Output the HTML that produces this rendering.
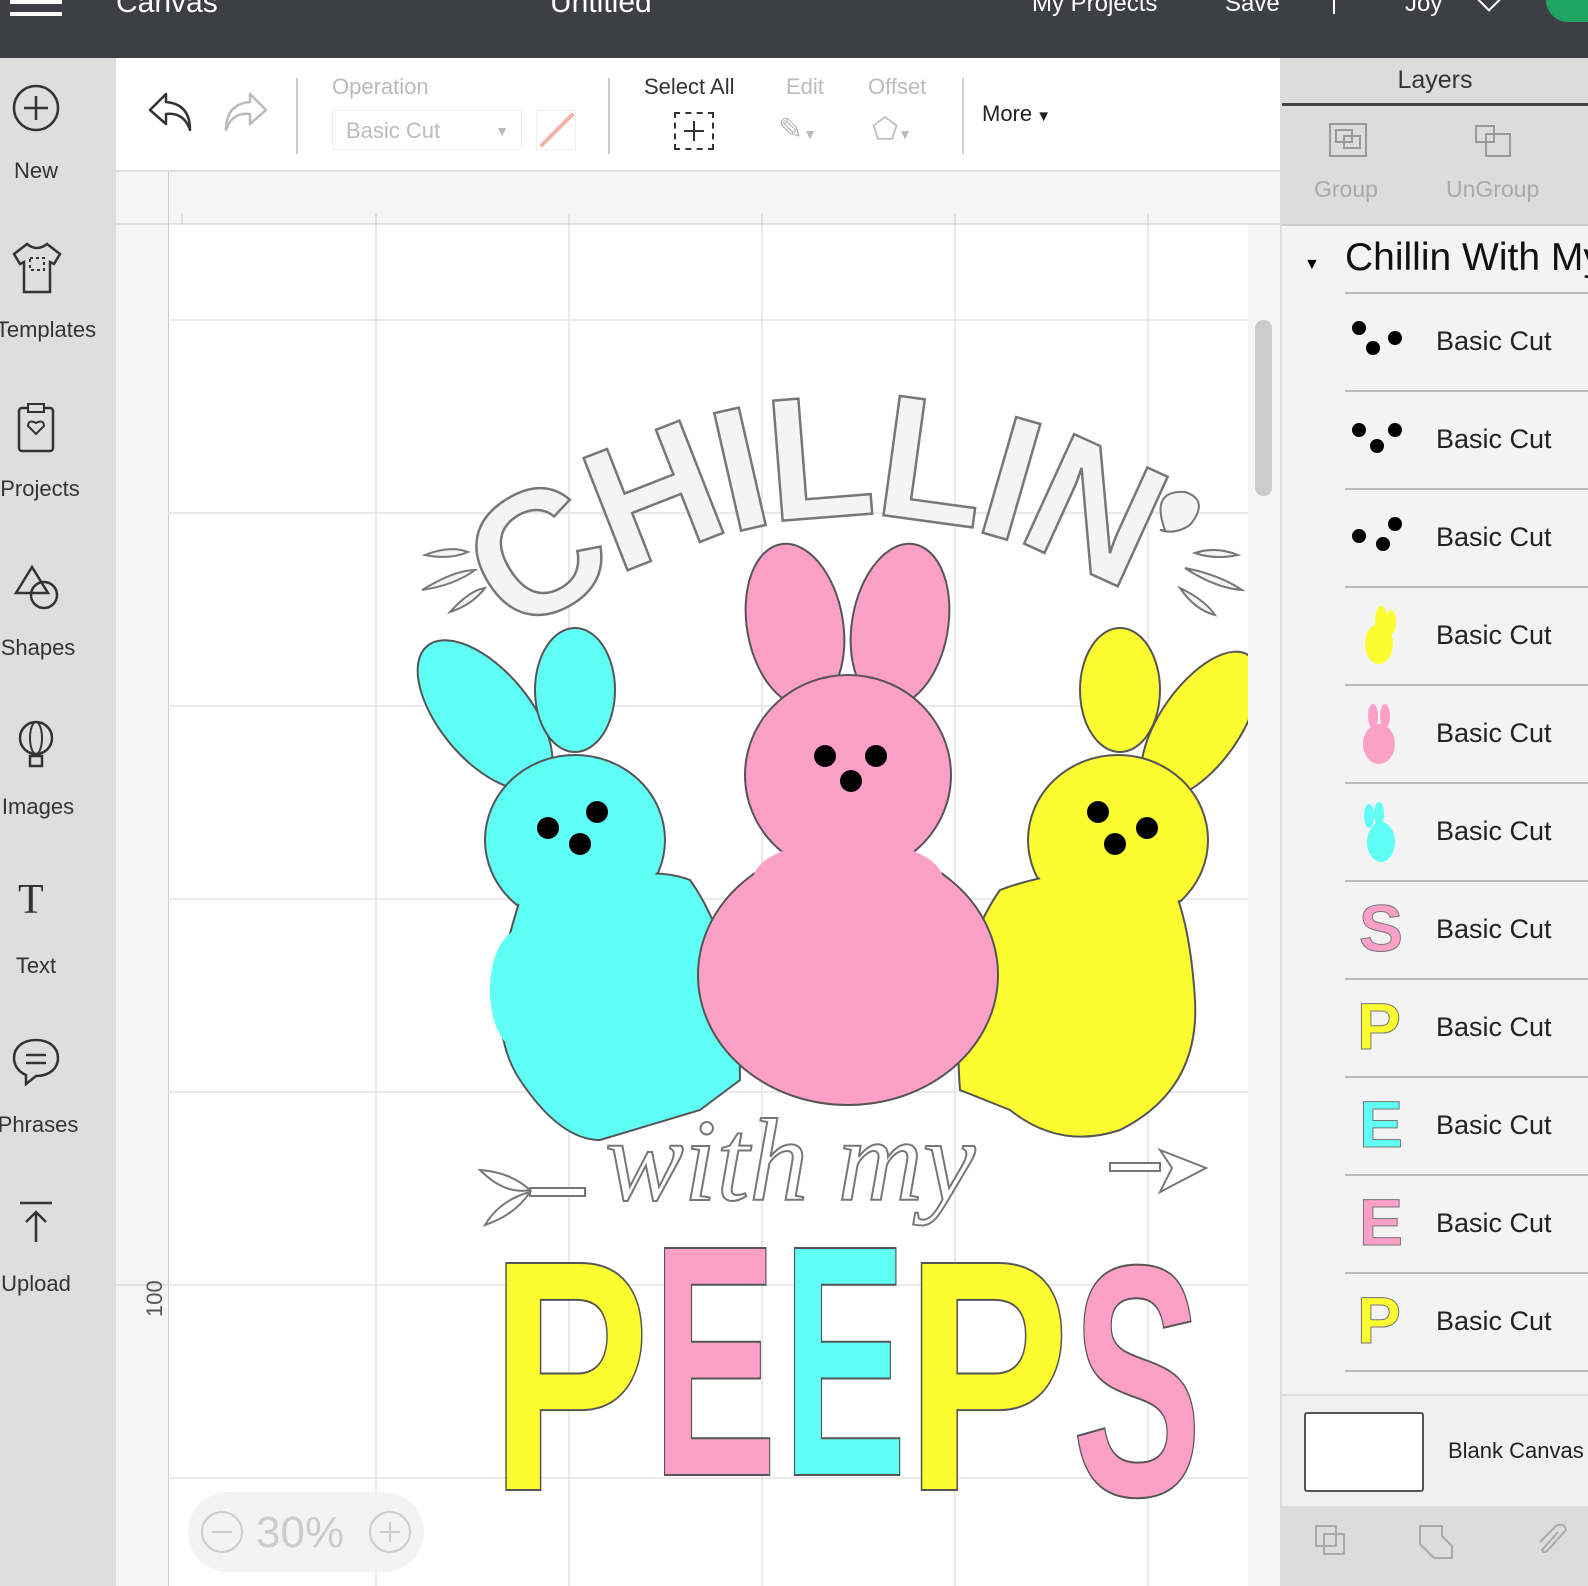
<!DOCTYPE html>
<html><head><meta charset="utf-8"><style>
*{margin:0;padding:0;box-sizing:border-box}
html,body{width:1588px;height:1586px;overflow:hidden;margin:0}
body{font-family:"Liberation Sans",sans-serif;background:#fff}
#root{position:relative;width:1588px;height:1586px;overflow:hidden;contain:paint}
.a{position:absolute}
.top{left:0;top:0;width:1588px;height:58px;background:#3d3f45;color:#fff;font-size:26px;overflow:hidden}
.side{left:0;top:58px;width:116px;height:1528px;background:#dedede;overflow:hidden}
.si{position:absolute;left:0;width:116px;text-align:center;font-size:22px;color:#333}
.tb{left:116px;top:58px;width:1164px;height:114px;background:#fff;border-bottom:2px solid #ddd}
.lay{left:1280px;top:58px;width:308px;height:1528px;background:#f3f3f3;border-left:2px solid #ddd;overflow:hidden}
.row{position:absolute;left:63px;width:245px;height:98px;border-bottom:2px solid #bbb}
.row span{position:absolute;left:91px;top:32px;font-size:27px;color:#222}
</style></head><body><div id="root">
<div class="a top">
 <div class="a" style="left:10px;top:0;width:52px;height:4px;background:#fff"></div>
 <div class="a" style="left:10px;top:12px;width:52px;height:4px;background:#fff"></div>
 <div class="a" style="left:116px;top:-14px;font-size:30px">Canvas</div>
 <div class="a" style="left:550px;top:-14px;font-size:30px">Untitled</div>
 <div class="a" style="left:1032px;top:-10px;font-size:24px">My Projects</div>
 <div class="a" style="left:1225px;top:-10px;font-size:24px">Save</div>
 <div class="a" style="left:1333px;top:-2px;width:2px;height:16px;background:#fff"></div>
 <div class="a" style="left:1405px;top:-10px;font-size:24px">Joy</div>
 <div class="a" style="left:1480px;top:-10px;width:18px;height:18px;border:2px solid #fff;transform:rotate(45deg)"></div>
 <div class="a" style="left:1546px;top:-22px;width:42px;height:44px;border-radius:22px 0 0 22px;background:#1fa463"></div>
</div>
<div class="a side">
 <svg class="a" style="left:12px;top:26px" width="48" height="48"><circle cx="24" cy="24" r="22" fill="none" stroke="#333" stroke-width="2.5"/><path d="M24 12v24M12 24h24" stroke="#333" stroke-width="2.5"/></svg>
 <div class="si" style="top:100px;left:-22px">New</div>
 <svg class="a" style="left:10px;top:182px" width="54" height="56"><path d="M17 4 L4 14 L10 24 L14 22 L14 52 L40 52 L40 22 L44 24 L50 14 L37 4 Q27 12 17 4Z" fill="none" stroke="#333" stroke-width="2.5"/><rect x="20" y="18" width="14" height="12" fill="none" stroke="#333" stroke-dasharray="3 3" stroke-width="2"/></svg>
 <div class="si" style="top:259px;left:-12px">Templates</div>
 <svg class="a" style="left:16px;top:344px" width="40" height="52"><rect x="3" y="6" width="34" height="43" rx="3" fill="none" stroke="#333" stroke-width="2.5"/><rect x="12" y="2" width="16" height="8" fill="#dedede" stroke="#333" stroke-width="2"/><path d="M20 32 L12 24 Q12 17 20 21 Q28 17 28 24Z" fill="none" stroke="#333" stroke-width="2"/></svg>
 <div class="si" style="top:418px;left:-18px">Projects</div>
 <svg class="a" style="left:12px;top:505px" width="48" height="48"><path d="M20 4 L4 30 L36 30Z" fill="none" stroke="#333" stroke-width="2.5"/><circle cx="32" cy="32" r="13" fill="none" stroke="#333" stroke-width="2.5"/></svg>
 <div class="si" style="top:577px;left:-20px">Shapes</div>
 <svg class="a" style="left:16px;top:662px" width="40" height="50"><ellipse cx="20" cy="18" rx="16" ry="16" fill="none" stroke="#333" stroke-width="2.5"/><ellipse cx="20" cy="18" rx="6" ry="16" fill="none" stroke="#333" stroke-width="2"/><rect x="14" y="36" width="12" height="10" fill="none" stroke="#333" stroke-width="2.5"/></svg>
 <div class="si" style="top:736px;left:-20px">Images</div>
 <div class="a" style="left:18px;top:818px;font-size:42px;color:#333;font-family:'Liberation Serif',serif">T</div>
 <div class="si" style="top:895px;left:-22px">Text</div>
 <svg class="a" style="left:10px;top:978px" width="52" height="52"><path d="M26 4 C12 4 4 12 4 22 C4 30 9 36 16 39 L16 48 L26 40 C40 40 48 32 48 22 C48 12 40 4 26 4Z" fill="none" stroke="#333" stroke-width="2.5"/><path d="M16 19h20M16 27h20" stroke="#333" stroke-width="2.5"/></svg>
 <div class="si" style="top:1054px;left:-20px">Phrases</div>
 <svg class="a" style="left:16px;top:1142px" width="40" height="44"><path d="M4 3h32M20 42V12M10 22l10-10 10 10" fill="none" stroke="#333" stroke-width="2.5"/></svg>
 <div class="si" style="top:1213px;left:-22px">Upload</div>
</div>
<div class="a tb">
 <svg class="a" style="left:30px;top:32px" width="50" height="44"><path d="M20 4 L4 20 L20 34 L20 24 Q38 22 44 40 Q44 14 20 12Z" fill="none" stroke="#333" stroke-width="2.5" stroke-linejoin="round"/></svg>
 <svg class="a" style="left:104px;top:32px" width="50" height="44"><path d="M30 4 L46 20 L30 34 L30 24 Q12 22 6 40 Q6 14 30 12Z" fill="none" stroke="#bbb" stroke-width="2.5" stroke-linejoin="round"/></svg>
 <div class="a" style="left:180px;top:20px;width:2px;height:76px;background:#ccc"></div>
 <div class="a" style="left:216px;top:16px;font-size:22px;color:#bbb">Operation</div>
 <div class="a" style="left:216px;top:52px;width:190px;height:40px;border:1px solid #eee;border-radius:3px;font-size:22px;color:#bbb;padding:7px 13px">Basic Cut<span style="position:absolute;right:12px;font-size:14px;top:12px">▼</span></div>
 <div class="a" style="left:420px;top:52px;width:40px;height:40px;border:1px solid #eee"><div class="a" style="left:18px;top:-4px;width:4px;height:46px;background:#f2b3a8;transform:rotate(45deg)"></div></div>
 <div class="a" style="left:492px;top:20px;width:2px;height:76px;background:#ccc"></div>
 <div class="a" style="left:528px;top:16px;font-size:22px;color:#333">Select All</div>
 <div class="a" style="left:558px;top:54px;width:40px;height:38px;border:2px dashed #333"><div class="a" style="left:8px;top:16px;width:20px;height:2px;background:#333"></div><div class="a" style="left:17px;top:7px;width:2px;height:20px;background:#333"></div></div>
 <div class="a" style="left:670px;top:16px;font-size:22px;color:#bbb">Edit</div>
 <div class="a" style="left:662px;top:54px;font-size:30px;color:#bbb">✎<span style="font-size:14px">▼</span></div>
 <div class="a" style="left:752px;top:16px;font-size:22px;color:#bbb">Offset</div>
 <div class="a" style="left:756px;top:54px;font-size:30px;color:#bbb">⬠<span style="font-size:14px">▼</span></div>
 <div class="a" style="left:846px;top:20px;width:2px;height:76px;background:#ccc"></div>
 <div class="a" style="left:866px;top:43px;font-size:22px;color:#222">More<span style="font-size:15px"> ▼</span></div>
</div>
<div class="a" style="left:116px;top:172px;width:1164px;height:1414px;background:#f5f5f5"></div>
<div class="a" style="left:168px;top:224px;width:1080px;height:1362px;background:#fff"></div>
<div class="a" style="left:168px;top:172px;width:1px;height:1414px;background:#ccc"></div>
<svg class="a" style="left:116px;top:172px" width="1164" height="1414">
 <g stroke="#e4e4e4" stroke-width="1.5">
  <line x1="260" y1="52" x2="260" y2="1414"/><line x1="453" y1="52" x2="453" y2="1414"/><line x1="646" y1="52" x2="646" y2="1414"/><line x1="839" y1="52" x2="839" y2="1414"/><line x1="1032" y1="52" x2="1032" y2="1414"/>
  <line x1="52" y1="148" x2="1132" y2="148"/><line x1="52" y1="341" x2="1132" y2="341"/><line x1="52" y1="534" x2="1132" y2="534"/><line x1="52" y1="727" x2="1132" y2="727"/><line x1="52" y1="920" x2="1132" y2="920"/><line x1="52" y1="1113" x2="1132" y2="1113"/><line x1="52" y1="1306" x2="1132" y2="1306"/>
 </g>
 <g stroke="#ccc"><line x1="66" y1="42" x2="66" y2="52"/><line x1="260" y1="42" x2="260" y2="52"/><line x1="453" y1="42" x2="453" y2="52"/><line x1="646" y1="42" x2="646" y2="52"/><line x1="839" y1="42" x2="839" y2="52"/><line x1="1032" y1="42" x2="1032" y2="52"/><line x1="0" y1="52" x2="1164" y2="52"/></g>
 <line x1="0" y1="1113" x2="52" y2="1113" stroke="#ccc"/>
 <text x="26" y="1165" transform="rotate(-90 26 1145)" font-size="22" fill="#555" font-family="Liberation Sans">100</text>
 <rect x="1139" y="148" width="17" height="176" rx="8" fill="#ccc"/>
</svg>
<svg class="a" style="left:0;top:0" width="1248" height="1586">
 <defs><path id="arc" d="M515 640 Q850 400 1175 625"/></defs>
 <text font-family="Liberation Sans" font-weight="bold" font-size="175" fill="#f4f4f4" stroke="#777" stroke-width="2.5" letter-spacing="-6"><textPath href="#arc" startOffset="0%">CHILLIN</textPath></text>
 <path d="M1165 530 Q1150 490 1185 492 Q1210 500 1190 525 Q1175 535 1160 530Z" fill="#f4f4f4" stroke="#777" stroke-width="2"/>
 <g fill="#f4f4f4" stroke="#777" stroke-width="2">
  <path d="M425 555 Q450 545 468 552 Q450 560 425 555Z"/><path d="M422 590 Q455 570 475 570 Q455 585 422 590Z"/><path d="M450 612 Q470 590 485 588 Q472 605 450 612Z"/>
  <path d="M1195 553 Q1215 546 1238 555 Q1215 560 1195 553Z"/><path d="M1185 568 Q1220 575 1242 590 Q1215 588 1185 568Z"/><path d="M1180 588 Q1205 600 1215 615 Q1195 610 1180 588Z"/>
 </g>
 <g fill="#5ffff6" stroke="#555" stroke-width="2">
  <ellipse cx="485" cy="715" rx="45" ry="90" transform="rotate(-40 485 715)"/>
  <ellipse cx="575" cy="690" rx="40" ry="62"/>
  <ellipse cx="575" cy="840" rx="90" ry="85"/>
  <path d="M520 900 Q480 1020 520 1080 Q560 1140 600 1140 L700 1110 L740 1080 Q740 950 690 880 Q640 860 520 900Z"/>
 </g>
 <ellipse cx="575" cy="840" rx="88" ry="83" fill="#5ffff6"/>
 <ellipse cx="520" cy="990" rx="30" ry="60" fill="#5ffff6"/>
 <g fill="#fcfc30" stroke="#555" stroke-width="2">
  <ellipse cx="1120" cy="690" rx="40" ry="62"/>
  <ellipse cx="1200" cy="725" rx="40" ry="85" transform="rotate(35 1200 725)"/>
  <ellipse cx="1118" cy="840" rx="90" ry="85"/>
  <path d="M1000 890 Q950 960 960 1090 L1010 1110 Q1060 1150 1120 1130 Q1200 1090 1195 1000 Q1190 920 1170 880 Q1080 860 1000 890Z"/>
 </g>
 <ellipse cx="1118" cy="840" rx="88" ry="83" fill="#fcfc30"/>
 <g fill="#fda0c8" stroke="#555" stroke-width="2">
  <ellipse cx="795" cy="625" rx="48" ry="82" transform="rotate(-10 795 625)"/>
  <ellipse cx="900" cy="625" rx="48" ry="82" transform="rotate(10 900 625)"/>
  <ellipse cx="848" cy="775" rx="103" ry="100"/>
  <ellipse cx="848" cy="975" rx="150" ry="130"/>
 </g>
 <ellipse cx="848" cy="775" rx="101" ry="98" fill="#fda0c8"/>
 <ellipse cx="848" cy="880" rx="95" ry="40" fill="#fda0c8"/>
 <g fill="#000">
  <circle cx="548" cy="828" r="11"/><circle cx="597" cy="812" r="11"/><circle cx="580" cy="844" r="11"/>
  <circle cx="825" cy="756" r="11"/><circle cx="876" cy="756" r="11"/><circle cx="851" cy="781" r="11"/>
  <circle cx="1098" cy="812" r="11"/><circle cx="1147" cy="828" r="11"/><circle cx="1115" cy="844" r="11"/>
 </g>
 <text x="605" y="1200" font-family="Liberation Serif" font-style="italic" font-size="118" fill="#fff" stroke="#777" stroke-width="2">with my</text>
 <g fill="#fff" stroke="#777" stroke-width="2">
  <path d="M530 1188 h55 v8 h-55z"/><path d="M1110 1163 h50 v8 h-50z"/>
  <path d="M1160 1150 L1206 1168 L1160 1192 L1172 1168Z"/>
  <path d="M480 1170 Q510 1172 530 1190 Q505 1195 480 1170Z"/><path d="M485 1225 Q500 1200 530 1192 Q515 1215 485 1225Z"/>
 </g>
 <g font-family="Liberation Sans" font-weight="bold" font-size="330" stroke="#555" stroke-width="2">
  <text x="490" y="1490" fill="#fcfc30" textLength="160" lengthAdjust="spacingAndGlyphs">P</text>
  <text x="652" y="1475" fill="#fda0c8" textLength="125" lengthAdjust="spacingAndGlyphs">E</text>
  <text x="782" y="1475" fill="#5ffff6" textLength="125" lengthAdjust="spacingAndGlyphs">E</text>
  <text x="905" y="1490" fill="#fcfc30" textLength="165" lengthAdjust="spacingAndGlyphs">P</text>
  <text x="1072" y="1495" fill="#fda0c8" textLength="130" lengthAdjust="spacingAndGlyphs">S</text>
 </g>
 <rect x="188" y="1492" width="236" height="80" rx="40" fill="#f2f2f2" opacity=".9"/>
 <circle cx="222" cy="1532" r="20" fill="none" stroke="#ccc" stroke-width="2"/><line x1="212" y1="1532" x2="232" y2="1532" stroke="#ccc" stroke-width="2"/>
 <text x="256" y="1547" font-family="Liberation Sans" font-size="44" fill="#ccc">30%</text>
 <circle cx="390" cy="1532" r="20" fill="none" stroke="#ccc" stroke-width="2"/><path d="M380 1532h20M390 1522v20" stroke="#ccc" stroke-width="2"/>
</svg>
<div class="a lay">
 <div class="a" style="left:0;top:0;width:306px;height:48px;background:#dcdcdc;border-bottom:3px solid #444;text-align:center;font-size:25px;color:#333;padding-top:8px">Layers</div>
 <div class="a" style="left:0;top:48px;width:306px;height:120px;background:#dcdcdc;border-bottom:2px solid #ccc">
  <svg class="a" style="left:44px;top:14px" width="46" height="42"><rect x="4" y="4" width="36" height="32" fill="none" stroke="#999" stroke-width="2"/><rect x="10" y="10" width="16" height="12" fill="none" stroke="#999" stroke-width="2"/><rect x="18" y="16" width="16" height="12" fill="none" stroke="#999" stroke-width="2"/></svg>
  <div class="a" style="left:32px;top:70px;font-size:23px;color:#aaa">Group</div>
  <svg class="a" style="left:190px;top:14px" width="46" height="42"><rect x="4" y="6" width="18" height="16" fill="none" stroke="#999" stroke-width="2"/><rect x="14" y="14" width="24" height="22" fill="none" stroke="#999" stroke-width="2"/></svg>
  <div class="a" style="left:164px;top:70px;font-size:23px;color:#aaa">UnGroup</div>
 </div>
 <div class="a" style="left:22px;top:198px;font-size:16px">▼</div>
 <div class="a" style="left:63px;top:178px;width:243px;overflow:hidden;font-size:39px;color:#111;white-space:nowrap">Chillin With My</div>
 <div class="a" style="left:63px;top:234px;width:243px;height:2px;background:#bbb"></div>
 <div class="row" style="top:236px"><svg class="a" style="left:4px;top:24px" width="60" height="50"><circle cx="10" cy="10" r="7"/><circle cx="46" cy="20" r="7"/><circle cx="24" cy="30" r="7"/></svg><span>Basic Cut</span></div>
 <div class="row" style="top:334px"><svg class="a" style="left:4px;top:24px" width="60" height="50"><circle cx="10" cy="14" r="7"/><circle cx="46" cy="14" r="7"/><circle cx="28" cy="30" r="7"/></svg><span>Basic Cut</span></div>
 <div class="row" style="top:432px"><svg class="a" style="left:4px;top:24px" width="60" height="50"><circle cx="10" cy="22" r="7"/><circle cx="46" cy="10" r="7"/><circle cx="34" cy="30" r="7"/></svg><span>Basic Cut</span></div>
 <div class="row" style="top:530px"><svg class="a" style="left:10px;top:16px" width="50" height="66"><ellipse cx="24" cy="40" rx="14" ry="20" fill="#fcfc30"/><ellipse cx="26" cy="16" rx="6" ry="14" fill="#fcfc30"/><ellipse cx="36" cy="18" rx="5" ry="12" fill="#fcfc30"/></svg><span>Basic Cut</span></div>
 <div class="row" style="top:628px"><svg class="a" style="left:10px;top:16px" width="50" height="66"><ellipse cx="24" cy="42" rx="16" ry="20" fill="#fda0c8"/><ellipse cx="18" cy="14" rx="5" ry="12" fill="#fda0c8"/><ellipse cx="30" cy="14" rx="5" ry="12" fill="#fda0c8"/></svg><span>Basic Cut</span></div>
 <div class="row" style="top:726px"><svg class="a" style="left:10px;top:16px" width="50" height="66"><ellipse cx="26" cy="42" rx="14" ry="20" fill="#5ffff6"/><ellipse cx="14" cy="16" rx="5" ry="12" fill="#5ffff6"/><ellipse cx="24" cy="14" rx="5" ry="12" fill="#5ffff6"/></svg><span>Basic Cut</span></div>
 <div class="row" style="top:824px"><b class="a" style="left:14px;top:8px;font-size:66px;color:#fda0c8;-webkit-text-stroke:1px #777">S</b><span>Basic Cut</span></div>
 <div class="row" style="top:922px"><b class="a" style="left:12px;top:8px;font-size:66px;color:#fcfc30;-webkit-text-stroke:1px #777">P</b><span>Basic Cut</span></div>
 <div class="row" style="top:1020px"><b class="a" style="left:14px;top:8px;font-size:66px;color:#5ffff6;-webkit-text-stroke:1px #777">E</b><span>Basic Cut</span></div>
 <div class="row" style="top:1118px"><b class="a" style="left:14px;top:8px;font-size:66px;color:#fda0c8;-webkit-text-stroke:1px #777">E</b><span>Basic Cut</span></div>
 <div class="row" style="top:1216px"><b class="a" style="left:12px;top:8px;font-size:66px;color:#fcfc30;-webkit-text-stroke:1px #777">P</b><span>Basic Cut</span></div>
 <div class="a" style="left:0;top:1336px;width:306px;height:112px;background:#f0f0f0;border-top:2px solid #ddd;overflow:hidden">
  <div class="a" style="left:22px;top:16px;width:120px;height:80px;border:2px solid #555;border-radius:3px;background:#fff"></div>
  <div class="a" style="left:166px;top:42px;font-size:22px;color:#222;white-space:nowrap">Blank Canvas</div>
 </div>
 <div class="a" style="left:0;top:1448px;width:306px;height:80px;background:#dcdcdc;overflow:hidden">
  <svg class="a" style="left:30px;top:16px" width="40" height="40"><rect x="4" y="4" width="20" height="20" fill="none" stroke="#aaa" stroke-width="2"/><rect x="12" y="12" width="20" height="20" fill="none" stroke="#aaa" stroke-width="2"/></svg>
  <svg class="a" style="left:134px;top:16px" width="40" height="40"><path d="M4 4h22v10l10 10v12H18L4 22Z" fill="none" stroke="#aaa" stroke-width="2"/></svg>
  <svg class="a" style="left:250px;top:16px" width="40" height="40"><path d="M8 20 L24 4 Q32 0 34 8 L16 28 Q12 32 10 28 L26 10" fill="none" stroke="#aaa" stroke-width="2"/></svg>
 </div>
</div>
</div></body></html>
